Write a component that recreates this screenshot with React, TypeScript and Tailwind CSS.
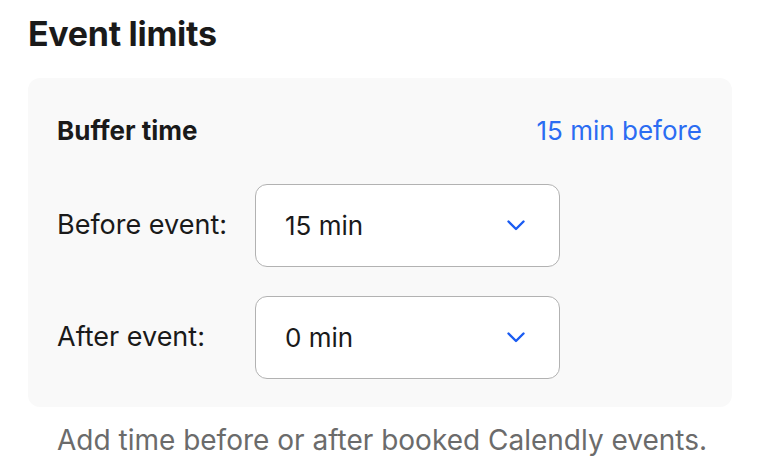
import React from "react";

function Chevron() {
  return (
    <svg
      className="w-[20px] h-[13px] text-[#1a5cf2]"
      viewBox="0 0 20 13"
      fill="none"
      stroke="currentColor"
      strokeWidth={2.4}
      strokeLinecap="round"
      strokeLinejoin="round"
    >
      <path d="M2.5 2.5l7.5 7.5 7.5-7.5" />
    </svg>
  );
}

function BufferSelect({ label, value }: { label: string; value: string }) {
  return (
    <div className="flex items-center">
      <span className="w-[198px] text-[27px] text-[#1a1a1a]">{label}</span>
      <div className="flex items-center justify-between w-[305px] h-[83px] bg-white border border-[#b2b2b2] rounded-[12px] pl-[29px] pr-[33px]">
        <span className="text-[26px] text-[#1a1a1a]">{value}</span>
        <Chevron />
      </div>
    </div>
  );
}

export default function App() {
  return (
    <div
      className="w-[758px] h-[472px] bg-white pl-[28px] pr-[26px] pt-[12px]"
      style={{ fontFamily: "Inter, 'Liberation Sans', sans-serif" }}
    >
      <h1 className="text-[34px] font-bold text-[#1a1a1a] leading-[44px] tracking-[-0.3px]">
        Event limits
      </h1>
      <div className="mt-[22px] bg-[#f9f9f9] rounded-[12px] pl-[29px] pr-[30px] pt-[36px] pb-[28px]">
        <div className="flex items-center justify-between h-[32px]">
          <span className="text-[26px] font-bold text-[#1a1a1a]">Buffer time</span>
          <span className="text-[26px] text-[#2b6cf2]">15 min before</span>
        </div>
        <div className="mt-[38px] flex flex-col gap-[29px]">
          <BufferSelect label="Before event:" value="15 min" />
          <BufferSelect label="After event:" value="0 min" />
        </div>
      </div>
      <p className="mt-[17px] pl-[29px] text-[28px] leading-[32px] text-[#6b6b6b]">
        Add time before or after booked Calendly events.
      </p>
    </div>
  );
}
